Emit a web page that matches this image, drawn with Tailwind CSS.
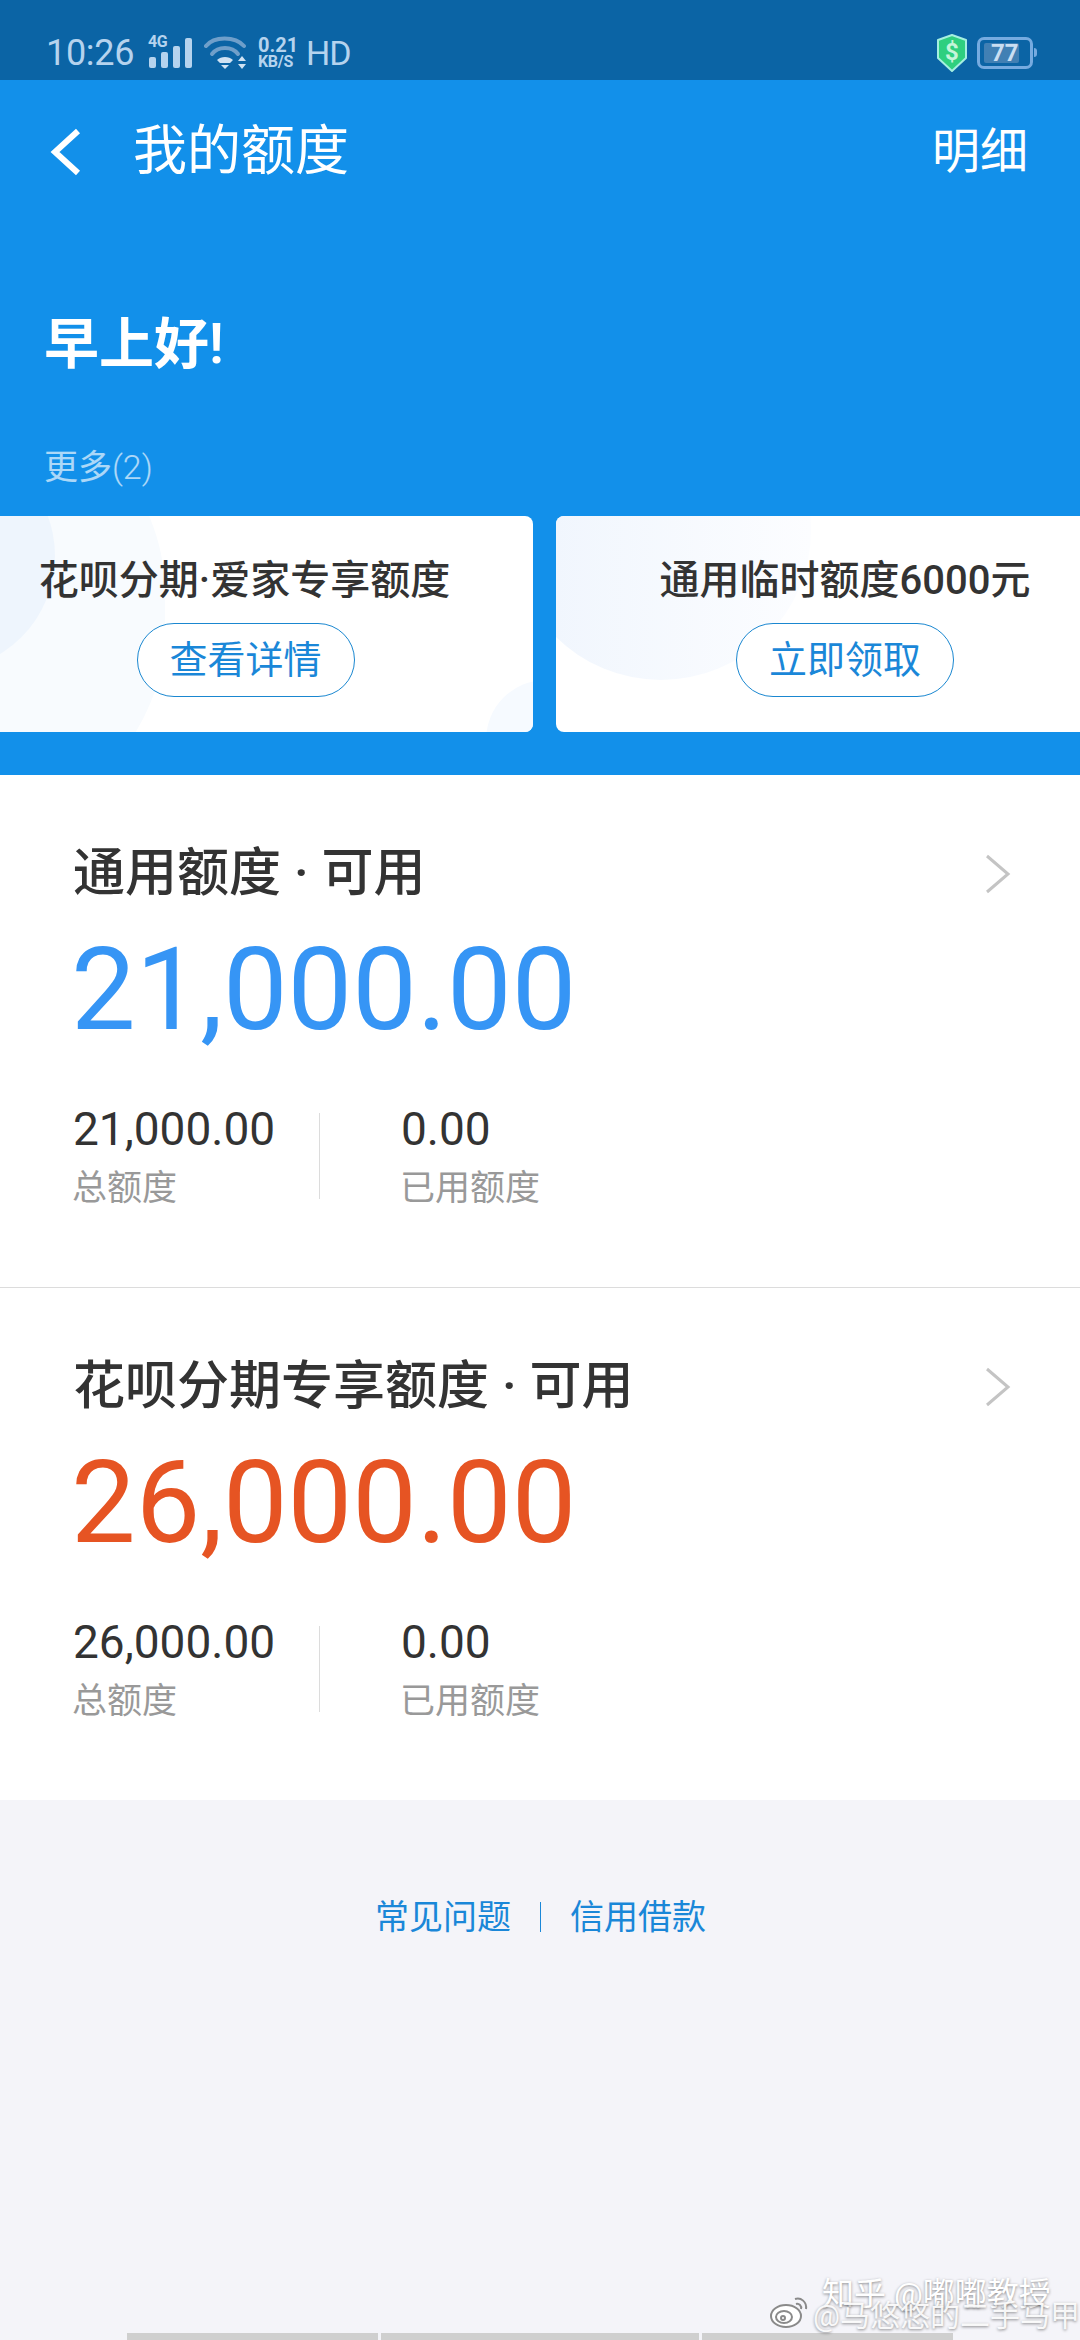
<!DOCTYPE html>
<html lang="zh-CN">
<head>
    <meta charset="UTF-8">
    <meta name="viewport" content="width=device-width, initial-scale=1.0">
    <title>我的额度</title>
    <script src="https://cdn.jsdelivr.net/npm/@tailwindcss/browser@4"></script>
</head>
<body class="w-[1080px] h-[2340px] overflow-hidden relative bg-[#f4f4f9] font-['Roboto','Noto_Sans_CJK_SC',sans-serif]">
    <!-- status bar -->
    <div class="h-[80px] bg-[#0b64a5] flex items-center pt-[26px] pl-[46px] pr-[44px] text-[#b5d3ee]">
        <span class="text-[36px] leading-none w-[102px] tracking-[-0.3px]">10:26</span>
        <div class="relative w-[46px] h-[32px]">
            <span class="absolute left-0 top-[-3px] text-[16px] leading-none font-bold tracking-[-0.5px]">4G</span>
            <svg class="absolute inset-0" width="46" height="32" viewBox="0 0 46 32" fill="currentColor">
                <rect x="1" y="20" width="7" height="11" rx="2" />
                <rect x="13" y="15" width="7" height="16" rx="2" />
                <rect x="25" y="9" width="7" height="22" rx="2" />
                <rect x="37" y="1" width="7" height="30" rx="2" />
            </svg>
        </div>
        <svg class="ml-[10px]" width="44" height="34" viewBox="0 0 44 34" fill="none">
            <path d="M2 10 C10 0 31 0 40 10" stroke="#6f9fca" stroke-width="4" stroke-linecap="round" />
            <path d="M8 18 C14 10 28 10 34 18" stroke="#6f9fca" stroke-width="4" stroke-linecap="round" />
            <path d="M13 24 C17 20 25 20 29 24 L26 27 L16 27 Z M17 29 H25 L21 33 Z" fill="#cfe2f3" />
            <path d="M34 25 L38 20 L42 25 Z M34 28 H42 L38 33 Z" fill="#cfe2f3" />
        </svg>
        <div class="ml-[10px] w-[42px] flex flex-col font-bold leading-none">
            <span class="text-[20px] leading-[17px]">0.21</span>
            <span class="text-[16px] leading-[15px] tracking-[-0.3px]">KB/S</span>
        </div>
        <span class="ml-[6px] text-[34px] leading-none tracking-[-1px]">HD</span>
        <svg class="ml-auto" width="32" height="38" viewBox="0 0 32 38">
            <path d="M16 1 L30 6 V24 L16 37 L2 24 V6 Z" fill="#2fcf7f" stroke="#a5efe0" stroke-width="2" stroke-linejoin="round" />
            <text x="16" y="26" text-anchor="middle" font-size="24" font-weight="700" fill="#c5f5da" font-family="Roboto">$</text>
        </svg>
        <div class="ml-[9px] mr-[3px] relative w-[56px] h-[32px] rounded-[7px] border-[3px] border-[#76abe0] flex items-center pl-[4px]">
            <div class="w-[35px] h-[20px] bg-[#4180b4] rounded-[2px]"></div>
            <span class="absolute left-[11px] top-[1px] text-[24px] leading-[24px] font-bold text-[#c9def2]">77</span>
            <span class="absolute right-[-7px] top-[8px] w-[3px] h-[9px] bg-[#76abe0] rounded-r"></span>
        </div>
    </div>

    <!-- blue header -->
    <div class="h-[695px] pt-[24px] bg-[#1290ea] text-white">
        <div class="h-[94px] flex items-center pl-[48px] pr-[52px] pt-[2px]">
            <svg width="34" height="48" viewBox="0 0 34 48" fill="none">
                <path d="M30 3 L7 24 L30 45" stroke="#fff" stroke-width="6" />
            </svg>
            <span class="ml-[51px] text-[54px] leading-none">我的额度</span>
            <span class="ml-auto text-[48px] leading-none">明细</span>
        </div>
        <div class="mt-[113px] pl-[44px] text-[55px] leading-[66px] font-semibold">早上好!</div>
        <div class="mt-[70px] pl-[44px] text-[34px] leading-[40px] text-white/65">更多<span class="font-light">(2)</span></div>
        <div class="mt-[29px] flex gap-[23px] h-[216px]">
            <div class="relative w-[533px] shrink-0 bg-white rounded-r-[8px] overflow-hidden flex flex-col items-center pr-[42px]">
                <div class="absolute left-[-230px] top-[-120px] w-[395px] h-[430px] rounded-full bg-[#f8fbfe]"></div>
                <div class="absolute left-[-175px] top-[-75px] w-[230px] h-[230px] rounded-full bg-[#eef5fd]"></div>
                <div class="absolute left-[486px] top-[164px] w-[120px] h-[120px] rounded-full bg-[#f6faff]"></div>
                <div class="relative mt-[45px] text-[40px] leading-[40px] text-[#333] font-medium whitespace-nowrap -ml-[2px]">花呗分期·爱家专享额度</div>
                <div class="relative mt-[22px] w-[218px] h-[74px] shrink-0 rounded-[37px] border border-[#1a87d0] bg-white flex items-center justify-center text-[38px] text-[#1a87d8]">查看详情</div>
            </div>
            <div class="relative flex-1 bg-white rounded-l-[8px] overflow-hidden flex flex-col items-center">
                <div class="absolute left-[-45px] top-[-136px] w-[300px] h-[300px] rounded-full bg-linear-to-r from-[#eff5fd] to-[#fcfdff]"></div>
                <div class="relative ml-[54px] mt-[45px] text-[40px] leading-[40px] text-[#333] font-medium whitespace-nowrap">通用临时额度6000元</div>
                <div class="relative mt-[22px] ml-[54px] w-[218px] h-[74px] shrink-0 rounded-[37px] border border-[#1a87d0] bg-white flex items-center justify-center text-[38px] text-[#1a87d8]">立即领取</div>
            </div>
        </div>
    </div>

    <!-- quota sections -->
    <div class="bg-white h-[513px] border-b border-[#dcdcdc] pl-[73px] pt-[71px] relative">
        <div class="text-[52px] leading-[56px] text-[#333] font-medium">通用额度 · 可用</div>
        <svg class="absolute left-[984px] top-[79px]" width="28" height="40" viewBox="0 0 28 40" fill="none">
            <path d="M3 2 L24 20 L3 38" stroke="#c4c4c4" stroke-width="3" />
        </svg>
        <div class="mt-[30px] text-[115px] leading-[116px] text-[#3695f5] -ml-[2px]">21,000.00</div>
        <div class="mt-[54px] flex">
            <div class="w-[247px] border-r border-[#dcdcdc] h-[86px] mt-[11px]">
                <div class="text-[46px] leading-[54px] text-[#333] -mt-[11px]">21,000.00</div>
                <div class="text-[35px] leading-[40px] text-[#999] mt-[13px] -ml-[1px]">总额度</div>
            </div>
            <div class="ml-[81px]">
                <div class="text-[46px] leading-[54px] text-[#333]">0.00</div>
                <div class="text-[35px] leading-[40px] text-[#999] mt-[13px] -ml-[1px]">已用额度</div>
            </div>
        </div>
    </div>
    <div class="bg-white h-[512px] pl-[73px] pt-[71px] relative">
        <div class="text-[52px] leading-[56px] text-[#333] font-medium">花呗分期专享额度 · 可用</div>
        <svg class="absolute left-[984px] top-[79px]" width="28" height="40" viewBox="0 0 28 40" fill="none">
            <path d="M3 2 L24 20 L3 38" stroke="#c4c4c4" stroke-width="3" />
        </svg>
        <div class="mt-[30px] text-[115px] leading-[116px] text-[#e65423] -ml-[2px]">26,000.00</div>
        <div class="mt-[54px] flex">
            <div class="w-[247px] border-r border-[#dcdcdc] h-[86px] mt-[11px]">
                <div class="text-[46px] leading-[54px] text-[#333] -mt-[11px]">26,000.00</div>
                <div class="text-[35px] leading-[40px] text-[#999] mt-[13px] -ml-[1px]">总额度</div>
            </div>
            <div class="ml-[81px]">
                <div class="text-[46px] leading-[54px] text-[#333]">0.00</div>
                <div class="text-[35px] leading-[40px] text-[#999] mt-[13px] -ml-[1px]">已用额度</div>
            </div>
        </div>
    </div>

    <!-- links -->
    <div class="mt-[93px] flex justify-center items-center text-[34px] leading-[48px] text-[#1a87d8] pl-[1px]">
        <span>常见问题</span>
        <span class="mx-[29px] w-[1px] h-[30px] bg-[#1a87d8]"></span>
        <span>信用借款</span>
    </div>

    <!-- nav bar remains -->
    <div class="absolute left-[127px] bottom-0 h-[7px] flex gap-[3px]">
        <div class="w-[251px] bg-[#cfcfcf]"></div>
        <div class="w-[318px] bg-[#cfcfcf]"></div>
        <div class="w-[251px] bg-[#cfcfcf]"></div>
    </div>

    <!-- watermarks -->
    <div class="absolute left-[822px] top-[2276px] text-[32px] leading-[36px] text-white whitespace-nowrap [text-shadow:0_1px_3px_rgba(0,0,0,0.45)]">知乎 @嘟嘟教授</div>
    <div class="absolute left-[813px] top-[2298px] text-[30px] leading-[36px] text-white/90 whitespace-nowrap [text-shadow:0_1px_3px_rgba(0,0,0,0.45)]">@马悠悠的二手马甲</div>
    <svg class="absolute left-[769px] top-[2294px]" width="42" height="36" viewBox="0 0 42 36" fill="none" stroke="#8a8a8a" stroke-width="2">
        <ellipse cx="17" cy="22" rx="15" ry="11" fill="#fff" />
        <ellipse cx="15" cy="23" rx="8" ry="6" />
        <circle cx="14" cy="24" r="2" />
        <path d="M26 5 C32 3 38 8 37 15 M27 10 C30 9 33 12 32 15" />
    </svg>
</body>
</html>
